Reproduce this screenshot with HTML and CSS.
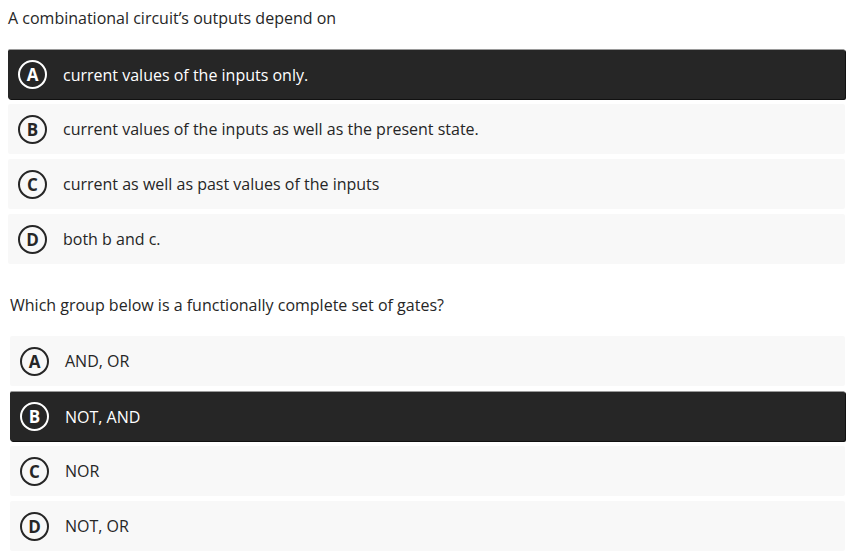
FILE: index.html
```html
<!DOCTYPE html>
<html>
<head>
<meta charset="utf-8">
<link rel="stylesheet" href="styles.css">
</head>
<body>
<div class="quiz">
  <section class="question q1">
    <p class="stem">A combinational circuit’s outputs depend on</p>
    <ul class="options">
      <li class="option selected"><span class="badge">A</span><span class="label">current values of the inputs only.</span></li>
      <li class="option"><span class="badge">B</span><span class="label">current values of the inputs as well as the present state.</span></li>
      <li class="option"><span class="badge">C</span><span class="label">current as well as past values of the inputs</span></li>
      <li class="option"><span class="badge">D</span><span class="label">both b and c.</span></li>
    </ul>
  </section>
  <section class="question q2">
    <p class="stem">Which group below is a functionally complete set of gates?</p>
    <ul class="options">
      <li class="option"><span class="badge">A</span><span class="label">AND, OR</span></li>
      <li class="option selected"><span class="badge">B</span><span class="label">NOT, AND</span></li>
      <li class="option"><span class="badge">C</span><span class="label">NOR</span></li>
      <li class="option"><span class="badge">D</span><span class="label">NOT, OR</span></li>
    </ul>
  </section>
</div>
</body>
</html>
```
FILE: styles.css
```css
html, body {
  margin: 0;
  padding: 0;
  background: #ffffff;
}
body {
  font-family: "Open Sans", "Liberation Sans", sans-serif;
  color: #262626;
  font-size: 16px;
}
.quiz {
  padding: 7px 19px 0 8px;
}
.question {
  margin: 0;
}
.q2 {
  margin-top: 30px;
  padding-left: 2px;
}
.stem {
  margin: 0;
  height: 22px;
  line-height: 22px;
  font-size: 16px;
}
.options {
  list-style: none;
  margin: 20px 0 0 0;
  padding: 0;
  display: flex;
  flex-direction: column;
  gap: 5px;
}
.option {
  height: 50px;
  box-sizing: border-box;
  background: #f8f8f8;
  border-radius: 2px;
  display: flex;
  align-items: center;
  padding-left: 10px;
}
.option.selected {
  background: #262626;
  color: #ffffff;
  border-top: 1px solid #9a9a9a;
  box-shadow: 1px 1px 0 #111;
}
.badge {
  width: 29px;
  height: 29px;
  box-sizing: border-box;
  border: 2px solid #262626;
  border-radius: 50%;
  display: flex;
  align-items: center;
  justify-content: center;
  font-weight: 700;
  font-size: 17px;
  line-height: 1;
  flex: none;
}
.selected .badge {
  border-color: #ffffff;
}
.label {
  margin-left: 16px;
  font-size: 16px;
}
```
